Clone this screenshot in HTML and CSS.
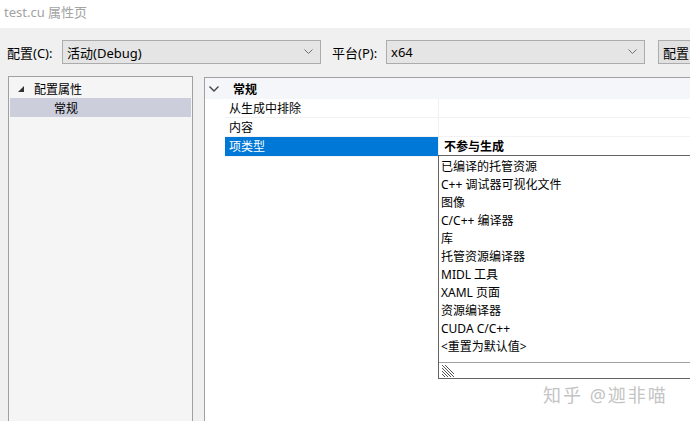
FILE: index.html
```html
<html lang="zh-CN">
<head>
    <meta charset="UTF-8">
    <title>test.cu 属性页</title>
    <link rel="stylesheet" href="styles.css">
</head>
<body>
    <div class="titlebar">test.cu 属性页</div>

    <div class="dialog">
        <div class="toolbar">
            <label class="tb-label">配置(C):</label>
            <div class="combo combo-config">
                <span>活动(Debug)</span>
                <svg class="chev" width="9" height="6" viewBox="0 0 9 6"><path d="M0.5 0.5 L4.5 4.5 L8.5 0.5" fill="none" stroke="#707070" stroke-width="1"/></svg>
            </div>
            <label class="tb-label tb-platform">平台(P):</label>
            <div class="combo combo-platform">
                <span>x64</span>
                <svg class="chev" width="9" height="6" viewBox="0 0 9 6"><path d="M0.5 0.5 L4.5 4.5 L8.5 0.5" fill="none" stroke="#707070" stroke-width="1"/></svg>
            </div>
            <button class="btn-manager">配置</button>
        </div>

        <div class="panes">
            <div class="tree">
                <div class="tree-row">
                    <svg class="tri" width="6" height="6" viewBox="0 0 6 6"><path d="M6 0 L6 6 L0 6 Z" fill="#333"/></svg>
                    <span>配置属性</span>
                </div>
                <div class="tree-row tree-child selected">常规</div>
            </div>

            <div class="grid">
                <div class="cat-row">
                    <svg class="cat-chev" width="10" height="6" viewBox="0 0 10 6"><path d="M0.5 0.5 L5 5 L9.5 0.5" fill="none" stroke="#444" stroke-width="1.4"/></svg>
                    <span class="cat-name">常规</span>
                </div>
                <div class="prop-row">
                    <div class="prop-name">从生成中排除</div>
                    <div class="prop-value"></div>
                </div>
                <div class="prop-row">
                    <div class="prop-name">内容</div>
                    <div class="prop-value"></div>
                </div>
                <div class="prop-row active">
                    <div class="prop-name">项类型</div>
                    <div class="prop-value">不参与生成</div>
                </div>

                <div class="dropdown">
                    <ul class="options">
                        <li>已编译的托管资源</li>
                        <li>C++ 调试器可视化文件</li>
                        <li>图像</li>
                        <li>C/C++ 编译器</li>
                        <li>库</li>
                        <li>托管资源编译器</li>
                        <li>MIDL 工具</li>
                        <li>XAML 页面</li>
                        <li>资源编译器</li>
                        <li>CUDA C/C++</li>
                        <li>&lt;重置为默认值&gt;</li>
                    </ul>
                    <div class="grip">
                        <svg width="14" height="13" viewBox="0 0 14 13">
                            <path d="M1 1 L13 13 M1 4 L10 13 M1 7 L7 13 M1 10 L4 13 M4 1 L13 10" stroke="#555" stroke-width="1" fill="none"/>
                        </svg>
                    </div>
                </div>
            </div>
        </div>

        <div class="watermark">知乎 @迦非喵</div>
    </div>
</body>
</html>
```

FILE: styles.css
```css
body {
    margin: 0;
    width: 690px;
    height: 421px;
    overflow: hidden;
    background-color: #f0f0f0;
    font-family: "Noto Sans", "Noto Sans CJK SC", sans-serif;
    font-size: 12px;
    color: #000;
}

/* title */
.titlebar {
    height: 28px;
    line-height: 24px;
    padding-left: 4px;
    background-color: #fff;
    color: #a3a3a3;
    font-size: 13px;
}

.dialog {
    position: relative;
    height: 393px;
}

/******/
/* TOOLBAR */
/*******/

.toolbar {
    display: flex;
    align-items: center;
    height: 24px;
    padding: 12px 0 12px 7px;
}

.toolbar > * {
    flex-shrink: 0;
}

.tb-label {
    font-size: 13px;
    width: 55px;
}

.tb-platform {
    width: 54px;
    margin-left: 11px;
}

.combo {
    box-sizing: border-box;
    display: flex;
    align-items: center;
    justify-content: space-between;
    height: 24px;
    padding: 0 7px 0 4px;
    background-color: #e5e5e5;
    border: 1px solid #acacac;
    font-size: 13px;
}

.combo-config {
    width: 259px;
}

.combo-platform {
    width: 259px;
}

/* dialog is wider than the window, the button runs off the edge */
.btn-manager {
    box-sizing: border-box;
    flex: 1;
    height: 24px;
    margin-left: 13px;
    padding: 0 0 0 4px;
    text-align: left;
    background-color: #e1e1e1;
    border: 1px solid #adadad;
    border-right: none;
    font-family: inherit;
    font-size: 13px;
    white-space: nowrap;
}

/******/
/* PANES */
/*******/

.panes {
    display: flex;
    gap: 11px;
    padding-left: 8px;
}

.tree {
    box-sizing: border-box;
    width: 185px;
    height: 360px;
    padding: 2px 1px 0 1px;
    background-color: #f5f5f5;
    border: 1px solid #a0a0a0;
}

.tree-row {
    display: flex;
    align-items: center;
    height: 19px;
    font-size: 12px;
}

.tri {
    margin: 0 10px 0 8px;
}

.tree-child {
    padding-left: 44px;
}

.tree-row.selected {
    background-color: #cccedb;
}

.grid {
    position: relative;
    flex: 1;
    height: 360px;
    margin-top: 1px;
    background-color: #fff;
    border-left: 1px solid #a0a0a0;
    border-top: 1px solid #a0a0a0;
}

.cat-row {
    display: flex;
    align-items: center;
    height: 21px;
    background-color: #f5f6f9;
}

.cat-chev {
    margin: 0 14px 0 4px;
}

.cat-name {
    font-weight: bold;
}

.prop-row {
    display: flex;
    height: 18px;
    margin-left: 20px;
    border-bottom: 1px solid #f2f2f2;
}

.prop-name {
    width: 209px;
    padding-left: 4px;
    line-height: 20px;
    border-right: 1px solid #f0f0f0;
}

.prop-value {
    flex: 1;
    padding-left: 5px;
    line-height: 20px;
    font-weight: bold;
}

.prop-row.active {
    height: 19px;
}

.prop-row.active .prop-name {
    background-color: #0078d7;
    color: #fff;
}

/* dropdown list */
.dropdown {
    position: absolute;
    left: 233px;
    top: 77px;
    width: 260px;
    background-color: #fff;
    border: 1px solid #646464;
}

.options {
    list-style: none;
    margin: 0;
    padding: 2px 0 6px 0;
}

.options li {
    height: 18px;
    line-height: 18px;
    padding-left: 2px;
}

.grip {
    height: 15px;
    border-top: 1px solid #a0a0a0;
}

.grip svg {
    display: block;
    margin: 1px 0 0 2px;
}

.watermark {
    position: absolute;
    left: 543px;
    top: 353px;
    color: #c4c4c4;
    font-size: 18px;
    letter-spacing: 2px;
}
```
